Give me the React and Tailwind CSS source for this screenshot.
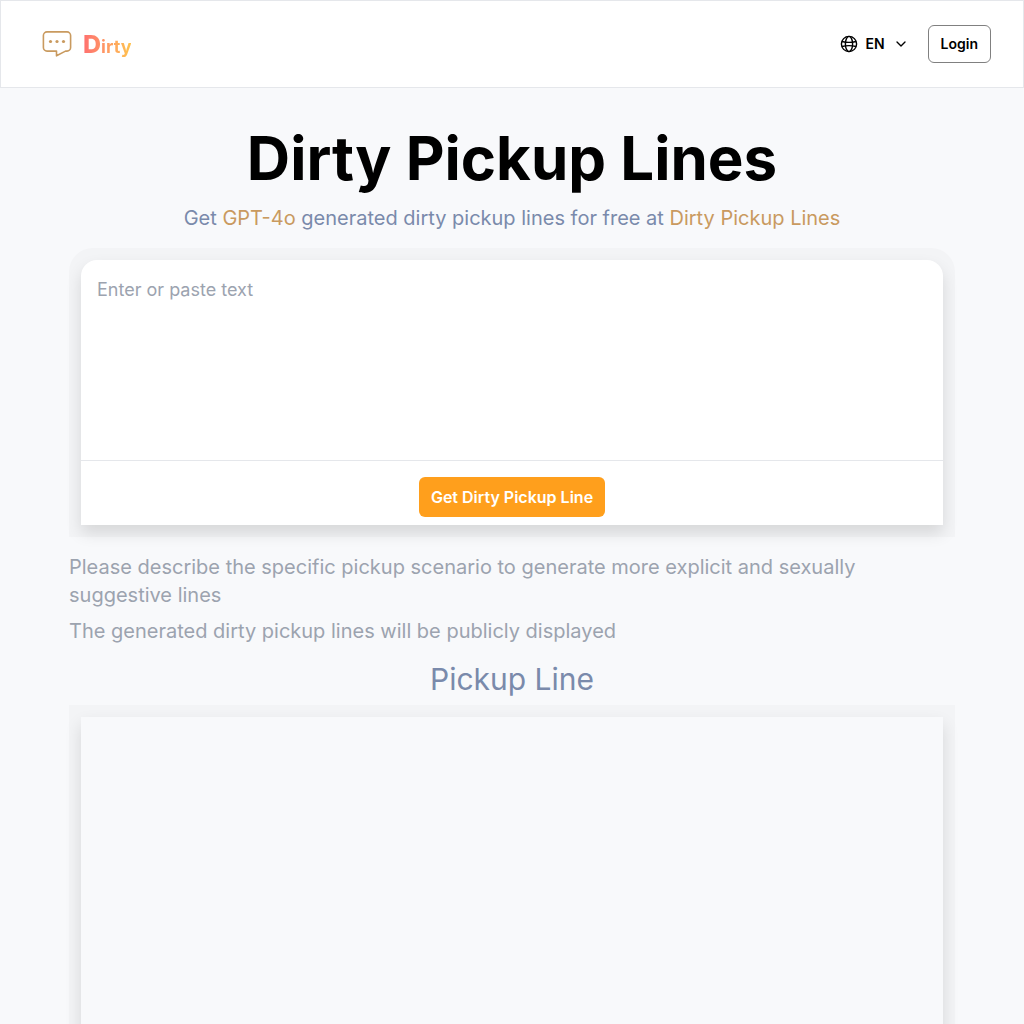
import { ChevronDown } from 'lucide-react';

const Logo = () => (
  <svg width="30" height="26" viewBox="0 0 30 26" fill="none" className="text-[#c99a5f]">
    <path
      d="M5 .9h20a3.6 3.6 0 0 1 3.600 3.600v12a3.600 3.600 0 0 1-3.600 3.600h-1.500l-9 4.700v-4.700H5a3.600 3.600 0 0 1-3.600-3.600v-12A3.600 3.600 0 0 1 5 .9z"
      stroke="currentColor"
      strokeWidth="1.600"
      strokeLinejoin="round"
    />
    <circle cx="8.500" cy="10.500" r="1.600" fill="currentColor" />
    <circle cx="15" cy="10.500" r="1.600" fill="currentColor" />
    <circle cx="21.500" cy="10.500" r="1.600" fill="currentColor" />
  </svg>
);

const GlobeIcon = () => (
  <svg width="18" height="18" viewBox="0 0 18 18" fill="none" stroke="#000" strokeWidth="1.400">
    <circle cx="9" cy="9" r="7.600" />
    <ellipse cx="9" cy="9" rx="3.600" ry="7.600" />
    <path d="M2 6.500c4 1 10 1 14 0M2 11.500c4-1 10-1 14 0" />
  </svg>
);

const App = () => {
  return (
    <div className="h-[1024px] overflow-hidden bg-[#f8f9fb] font-['Inter',sans-serif]">
      <header className="h-[88px] flex justify-between items-center bg-white border border-[#e5e7eb] pl-[41px] pr-[32px]">
        <div className="flex items-center gap-[11px]">
          <Logo />
          <span className="mt-[2px] font-bold text-[18px] leading-7 bg-gradient-to-r from-[#ff6f6f] to-[#ffc24d] bg-clip-text text-transparent">
            <span className="text-[25px] font-extrabold">D</span>irty
          </span>
        </div>
        <div className="flex items-center gap-[19px]">
          <div className="flex items-center text-black text-sm font-semibold">
            <GlobeIcon />
            <span className="ml-[7px]">EN</span>
            <ChevronDown size={16} className="ml-[8px]" />
          </div>
          <button className="h-[38px] px-[12px] rounded-md border border-[#808080] bg-white text-sm font-semibold text-black">
            Login
          </button>
        </div>
      </header>

      <main className="w-[886px] mx-auto flex flex-col">
        <h1 className="mt-[38px] text-center text-[60px] leading-[64px] font-bold text-black">
          Dirty Pickup Lines
        </h1>
        <p className="mt-[14px] text-center text-[20px] leading-[28px] text-[#7a8aab]">
          Get <span className="text-[#c99a5f]">GPT-4o</span> generated dirty pickup lines for free at{' '}
          <span className="text-[#c99a5f]">Dirty Pickup Lines</span>
        </p>

        <div className="mt-[16px] p-[12px] rounded-t-[24px] bg-[#f3f4f6]">
          <div className="h-[265px] flex flex-col bg-white rounded-t-[16px] shadow-[0_8px_16px_rgba(0,0,0,0.12)]">
            <div className="h-[201px] px-[16px] pt-[16px] text-[18px] leading-[28px] text-[#9ca3af] border-b border-[#e5e7eb]">
              Enter or paste text
            </div>
            <div className="flex-1 flex justify-center items-end pb-[8px]">
              <button className="h-[40px] px-[12px] rounded-md bg-[#ff9f1c] text-white text-base font-semibold">
                Get Dirty Pickup Line
              </button>
            </div>
          </div>
        </div>

        <p className="mt-[16px] text-[20px] leading-[28px] text-[#9ca3af]">
          Please describe the specific pickup scenario to generate more explicit and sexually suggestive lines
        </p>
        <p className="mt-[8px] text-[20px] leading-[28px] text-[#9ca3af]">
          The generated dirty pickup lines will be publicly displayed
        </p>

        <h2 className="mt-[16px] text-center text-[30px] leading-[36px] text-[#7a8aab]">Pickup Line</h2>

        <div className="mt-[8px] p-[12px] bg-[#f3f4f6]">
          <div className="h-[600px] bg-[#f8f9fb] shadow-[0_8px_16px_rgba(0,0,0,0.12)]"></div>
        </div>
      </main>
    </div>
  );
};

export default App;
